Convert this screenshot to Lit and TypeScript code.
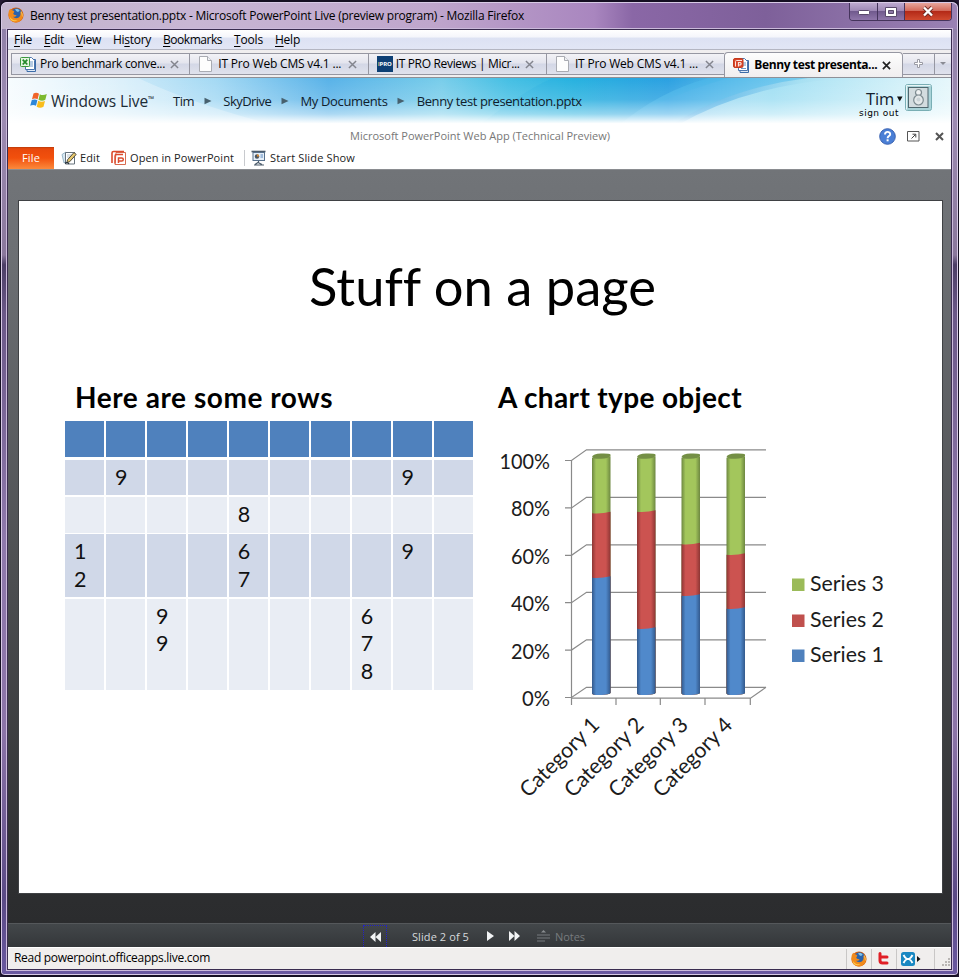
import { LitElement, html, svg, css } from "lit";
import { customElement, property, query } from "lit/decorators.js";

/* Text set to an exact advance width by adjusting its tracking. */
@customElement("fit-text")
class FitText extends LitElement {
  static styles = css`
    :host { display: inline-block; white-space: pre; flex: none; }
    .run { display: inline-block; }
  `;
  @property({ type: Number }) w = 0;
  @query(".run") run!: HTMLElement;
  firstUpdated() {
    const count = (this.textContent || "").length;
    const natural = this.run.getBoundingClientRect().width;
    if (this.w && count) {
      this.run.style.letterSpacing = `${(this.w - natural) / count}px`;
      this.style.width = `${this.w}px`;
    }
  }
  render() {
    return html`<span class="run"><slot></slot></span>`;
  }
}

const firefox = html`<svg width="16" height="16" viewBox="0 0 16 16">
  <circle cx="8" cy="8" r="7.6" fill="#d8600c"/>
  <circle cx="8.6" cy="6.6" r="5.4" fill="#2a62ac"/>
  <path d="M7 2.5c2-1 4-.3 4.6 1.2L10 5 8.5 4.2z" fill="#7fc4ec"/>
  <path d="M.6 5C1 3.200 2 2 2.600 1.800 2.800 3 3.600 3.400 5 3.600 6.400 4 6.800 5 5.400 6.200 4.800 7 6 8 8.600 8.200 7.800 10 6 10 5 9.600 6.600 12 10.400 11.800 12 9 12.800 7.600 12.600 5.600 12 4.400 14 5 15 7 14.800 9 14.400 13 11 15.400 8 15.400 3 15.400 0 11 .6 5z" fill="#f08a1c"/>
  <path d="M1.200 8c.8 4 4.800 6 8.400 5-2 1.800-5.600 1.600-7.200-.8z" fill="#fbc84a"/>
  <path d="M12.600 3.500c2 1.500 2.700 4.500 1.500 7-.2-2.500-.5-4-1.500-7z" fill="#fbd060"/>
</svg>`;

const sheetPages = html`<svg width="17" height="16" viewBox="0 0 17 16">
  <path d="M7 3.500h8.500v12H7z" fill="#dfeaf6" stroke="#3c6ca8"/>
  <path d="M5.500 1.500h6l3 3v9h-9z" fill="#fff" stroke="#4a74ac"/>
  <path d="M8 6h5M8 8h5M8 10h5" stroke="#6f98c6"/>
  <rect x=".5" y="1.500" width="9" height="9" rx="1" fill="#e6f5e2" stroke="#3c9a3c"/>
  <path d="M2.700 3.700l4.600 4.800M7.300 3.700L2.700 8.500" stroke="#258a2c" stroke-width="1.800"/>
</svg>`;

const slidePages = html`<svg width="17" height="16" viewBox="0 0 17 16">
  <path d="M7 3.500h8.500v12H7z" fill="#dfeaf6" stroke="#3c6ca8"/>
  <path d="M5.500 1.500h6l3 3v9h-9z" fill="#fff" stroke="#4a74ac"/>
  <path d="M10 6h3M10 8h3M8 11.500h5" stroke="#6f98c6"/>
  <rect x=".5" y="1.500" width="9.500" height="9" rx="1.500" fill="#d8452a" stroke="#c43a1c"/>
  <path d="M2.500 9.500V4.500q0-1 1-1H9" fill="none" stroke="#fbe4dc" stroke-width="1"/>
  <path d="M5.500 9.500V5.500h1.700q1.800 1 0 2.500H5.500" fill="none" stroke="#fbe4dc" stroke-width="1.200"/>
</svg>`;

const blankPage = html`<svg width="13" height="16" viewBox="0 0 13 16">
  <path d="M.5.5h8l4 4v11H.5z" fill="#fdfdfd" stroke="#a9abb2"/>
  <path d="M8.500.5v4h4" fill="#eef0f4" stroke="#a9abb2"/>
</svg>`;

const itpro = html`<span class="itpro"><i>I</i>PRO</span>`;

const cross = (size: number, color: string, weight: number) => html`<svg width=${size} height=${size} viewBox="0 0 8 8">
  <path d="M.8.8l6.400 6.400M7.200.8L.8 7.200" stroke=${color} stroke-width=${weight}/>
</svg>`;

const windowsFlag = html`<svg width="18" height="17" viewBox="0 0 18 17">
  <path d="M3.500 1.500C5.500.3 7.400.6 9 1.700L7.600 7.300C6 6.300 4 6.200 2 7.200z" fill="#f0642a"/>
  <path d="M9.800 2.200c2 1.200 4.400 1.200 7-.2l-1.500 5.800c-2 1.200-4.600 1.200-6.800 0z" fill="#7dba2f"/>
  <path d="M1.800 8.100c2-1 4-.9 5.600.1L6 13.800C4.200 12.700 2.200 12.700.2 13.800z" fill="#2f88d8"/>
  <path d="M8.200 8.800c2.200 1.200 4.600 1.200 6.800.1l-1.500 5.900c-2.200 1.200-4.600 1.200-6.800 0z" fill="#f9bd1c"/>
</svg>`;

const crumbArrow = html`<svg class="crumb-arrow" width="8" height="8" viewBox="0 0 8 8"><path d="M.5.800L7.500 4 .5 7.200z" fill="#47606e"/></svg>`;

const editIcon = html`<svg width="16" height="16" viewBox="0 0 16 16">
  <path d="M1 4.500L5 2v9l-2 2z" fill="#d9e8f2" stroke="#86a8bc" stroke-width=".8"/>
  <path d="M4.500 2.500h9v11.500h-9z" fill="#fff" stroke="#66727c"/>
  <path d="M6 5h5M6 7h4" stroke="#a8b6c0" stroke-width=".8"/>
  <path d="M6.500 9.800L13 2.500l2.200 1.900-6.500 7.300-2.800.8z" fill="#e8c86c" stroke="#3c3c34" stroke-width=".9"/>
  <path d="M4 13.500c1.500-1.500 3-1 4 .5" fill="none" stroke="#252f38" stroke-width="1.200"/>
</svg>`;

const pptIcon = html`<svg width="16" height="16" viewBox="0 0 16 16">
  <path d="M5 2.500h9.500v12H4z" fill="#fff" stroke="#d45a3c" stroke-width=".9"/>
  <path d="M1 13V3c0-1 .5-1.500 1.500-1.500H13" fill="none" stroke="#dc4a2c" stroke-width="1.600"/>
  <path d="M4 13.500V6c0-1 .5-1.500 1.500-1.500H12" fill="none" stroke="#dc4a2c" stroke-width="1.400"/>
  <path d="M7.500 13V8h3.300c2 0 2 3 0 3H8" fill="none" stroke="#dc4a2c" stroke-width="1.500"/>
</svg>`;

const showIcon = html`<svg width="16" height="16" viewBox="0 0 16 16">
  <path d="M.5 1.500h14" stroke="#4c5c6c" stroke-width="1.600"/>
  <rect x="2" y="2.500" width="11.500" height="8" fill="#e4eef8" stroke="#56708c"/>
  <circle cx="6" cy="6.500" r="2.200" fill="#4a545e"/><path d="M6 6.500V4.300a2.200 2.200 0 0 1 2.200 2.200z" fill="#e08a2c"/>
  <path d="M9.500 5H12M9.500 7H12" stroke="#5c8ac0"/>
  <path d="M7.500 11v2M4 14.500l3-2 4 2M3 15h10" stroke="#4c5c6c" stroke-width="1.200" fill="none"/>
</svg>`;

const bars = [
  { x: 592, tops: [577, 512.5] },
  { x: 637, tops: [628, 511] },
  { x: 681.5, tops: [595, 543.500] },
  { x: 726.500, tops: [608, 554] },
];

@customElement("slide-chart")
class SlideChart extends LitElement {
  static styles = css`
    :host { display: block; }
    svg { display: block; }
    text { font-family: Lato, "Liberation Sans", sans-serif; font-size: 21.500px; fill: #1c1c1c; }
  `;
  render() {
    const ticks = [0, 1, 2, 3, 4, 5];
    const front = (i: number) => 697.5 - i * 47.400;
    const back = (i: number) => 687.3 - i * 47.500;
    const grad = (id: string, edge: string, mid: string) => svg`
      <linearGradient id=${id} x1="0" x2="1" y1="0" y2="0">
        <stop offset="0" stop-color=${edge}/><stop offset=".22" stop-color=${mid}/>
        <stop offset=".75" stop-color=${mid}/><stop offset="1" stop-color=${edge}/>
      </linearGradient>`;
    return html`<svg width="420" height="375" viewBox="490 435 420 375">
      <defs>
        ${grad("blue", "#33598c", "#5089cb")}
        ${grad("red", "#8c3634", "#cc5350")}
        ${grad("green", "#6d8741", "#a3c65c")}
      </defs>
      <g fill="none" stroke="#8a8a8a" stroke-width="1.200">
        ${ticks.map((i) => svg`<path d="M565 ${front(i)}H571.500L586.500 ${back(i)}H766"/>`)}
        <path d="M571.500 460V705M571.500 698.200H750.500L766 687.300"/>
        <path d="M616 698v7M660.300 698v7M705 698v7M750.300 698v7"/>
      </g>
      ${bars.map(({ x, tops: [b, r] }) => {
        const w = 18.500;
        const seg = (top: number, id: string) =>
          svg`<path d="M${x} ${top + .7}Q${x + w / 2} ${top + 1.500} ${x + w} ${top - .8}V693Q${x + w - 1} 694.500 ${x + w / 2} 695T${x} 693.500Z" fill="url(#${id})"/>`;
        return svg`${seg(457, "green")}${seg(r, "red")}${seg(b, "blue")}
          <path d="M${x} 457Q${x + 1} 453.800 ${x + 9} 453.500T${x + w} 454.500V456Q${x + w - 2} 458.500 ${x + 9} 458.800T${x} 457Z" fill="#748f45"/>`;
      })}
      ${ticks.map((i) => {
        const w = i === 0 ? 28 : i === 5 ? 50.500 : 39;
        return svg`<text x=${550 - w} y=${706 - i * 47.400} textLength=${w} lengthAdjust="spacingAndGlyphs">${`${i * 20}%`}</text>`;
      })}
      ${[1, 2, 3, 4].map((n, i) => svg`<text transform="translate(${528.500 + i * 44.400} 798.500) rotate(-45)" textLength="102" lengthAdjust="spacingAndGlyphs">${`Category ${n}`}</text>`)}
      ${[["3", "#9bbb59", 584.500], ["2", "#c0504d", 620.500], ["1", "#4f81bd", 655.500]].map(
        ([n, c, y]) => svg`<rect x="792" y=${(y as number) - 6} width="12.500" height="12.500" fill=${c}/>
          <text x="810" y=${(y as number) + 6.500} textLength="74" lengthAdjust="spacingAndGlyphs">${`Series ${n}`}</text>`
      )}
    </svg>`;
  }
}

const rows: { kind: string; cells: Record<number, string[]> }[] = [
  { kind: "head", cells: {} },
  { kind: "dark r1", cells: { 1: ["9"], 8: ["9"] } },
  { kind: "lite r2", cells: { 4: ["8"] } },
  { kind: "dark r3", cells: { 0: ["1", "2"], 4: ["6", "7"], 8: ["9"] } },
  { kind: "lite r4", cells: { 2: ["9", "9"], 7: ["6", "7", "8"] } },
];

const menus: [string, number][] = [["File", 18], ["Edit", 20], ["View", 25], ["History", 38], ["Bookmarks", 59], ["Tools", 29], ["Help", 25]];

@customElement("app-root")
class AppRoot extends LitElement {
  static styles = css`
    :host { display: block; width: 959px; height: 977px; font-family: "Open Sans", "Noto Sans", sans-serif; font-size: 11.500px; color: #000; }
    * { box-sizing: border-box; }
    svg { display: block; flex: none; }
    .window { width: 959px; height: 977px; padding: 0 6px 6px 6px; border: 1px solid #150f22; border-width: 2px 1px; background:
      linear-gradient(#8c7ea6, #9d8bb2 12%, #8a789c 26%, #4c3e66 27%, #6b5888 32%, #8f79ac 55%, #8c74a8 75%, #5b4a86 92%, #6a58a0);
      display: flex; flex-direction: column; box-shadow: inset 0 0 0 1px #d8cae6; border-radius: 7px 7px 5px 5px; }
    .page { background: #241a34; min-height: 977px; }
    .title { height: 27px; flex: none; display: flex; align-items: flex-start; margin: 0 -5px; padding-left: 6px; border-radius: 6px 6px 0 0; border-top: 1px solid #d8cae6;
      background: linear-gradient(90deg, #c2b4cc 0, #c8b6d4 20%, #bfa6cc 45%, #a986bf 62%, #8a67a6 66%, #7e609a 80%, #9a82b4 100%); }
    .title .logo { margin-top: 4px; }
    .title fit-text { margin: 4px 0 0 6px; font-size: 12px; line-height: 17px; }
    .controls { margin-left: auto; margin-right: 5px; display: flex; height: 18px; border: 1px solid #45345c; border-top: 0; border-radius: 0 0 4px 4px; overflow: hidden; }
    .ctl { width: 28px; display: grid; place-items: center; background: linear-gradient(#bda9cf, #9c86b4 48%, #715a8e 50%, #8f76aa); border-right: 1px solid #45345c; }
    .ctl.mid { width: 27px; }
    .ctl.close { width: 46px; border-right: 0; background: linear-gradient(#e6a59c, #d2695a 46%, #b42a18 50%, #d04a30); }
    .client { width: 945px; height: 941px; border: 1px solid #3a2c50; outline: 1px solid #cbbadb; flex: none; display: flex; flex-direction: column; background: #fff; overflow: hidden; }
    .menu { height: 20px; flex: none; display: flex; gap: 12px; padding: 2px 0 0 6px; background: linear-gradient(#fff 0, #f5f6fb 35%, #dde2f3 45%, #e2e6f5 100%); border-bottom: 1px solid #b4b6c2; font-size: 12px; line-height: 16px; }
    .menu u { text-underline-offset: 1.500px; text-decoration-thickness: 1px; }
    .tabs { height: 28px; flex: none; display: flex; padding: 3px 0 2px 3px; background: #f0eeef; border-bottom: 1px solid #8f9097; align-items: stretch; }
    .tab { width: 178.500px; display: flex; align-items: center; border: 1px solid #9697a2; border-right: 0; padding-left: 8px; background: linear-gradient(#f2f2f6, #e4e5ee 45%, #d3d7e6 50%, #e0e2ec); }
    .tab fit-text { margin-left: 3px; font-size: 12px; line-height: 18px; }
    .tab .x { margin-left: 5px; }
    .tab.page-tab { padding-left: 9px; }
    .tab.page-tab fit-text { margin-left: 6px; }
    .tab.page-tab .x { margin-left: 7px; }
    .tab.active { background: linear-gradient(#fdfdfd, #f0eeef); border-right: 1px solid #9697a2; border-bottom: 0; border-radius: 4px 4px 0 0; margin: -1px 0 -2px; font-weight: 700; width: 179px; padding-left: 8px; }
    .tab.active fit-text { margin-left: 4px; }
    .tab.add { width: 31px; padding: 0; justify-content: center; border-left: 0; }
    .tab.more { width: 17px; padding: 0; justify-content: center; }
    .itpro { width: 16px; height: 16px; background: #0d3f74; color: #fff; font-size: 6px; line-height: 16px; text-align: center; letter-spacing: -.2px; flex: none; overflow: hidden; font-weight: 700; }
    .itpro i { font-style: normal; color: #e0c070; }
    .banner { height: 48px; flex: none; display: grid; }
    .banner > * { grid-area: 1 / 1; min-width: 0; }
    .crumbs { display: flex; align-items: center; padding: 0 0 3px 22px; font-size: 13px; color: #10202c; }
    .brand { font-size: 15.500px; margin-left: 3px; color: #1c2c36; }
    .tm { font-size: 8px; margin: -5px 19px 0 0; }
    .crumb-arrow { margin: 0 11.500px 0 9.700px; }
    .user { display: flex; justify-content: flex-end; padding: 6px 19px 0 0; gap: 2px; }
    .who { display: flex; flex-direction: column; align-items: flex-end; }
    .name { display: flex; align-items: center; font-size: 16.500px; line-height: 18px; gap: 3px; margin-top: 6px; color: #13202c; height: 17px; }
    .out { font-family: "DejaVu Sans", sans-serif; font-size: 9px; line-height: 11px; margin: 1px 4px 0 0; }
    .app { height: 20px; flex: none; display: grid; grid-template-columns: 342px 1fr auto; color: #777; font-size: 11px; line-height: 20px; }
    .app .heading { grid-column: 2; }
    .app-icons { display: flex; gap: 11px; align-items: center; padding-right: 7px; }
    .close-app { margin-left: 4px; }
    .tools { height: 23px; flex: none; display: flex; align-items: center; font-size: 11px; line-height: 22px; color: #222; padding-top: 1px; }
    .file { width: 46px; height: 22px; color: #fff; display: flex; justify-content: center; background: linear-gradient(#b93a0a 0, #e8480c 8%, #f2500d 50%, #fb8a3c 100%); margin-right: 7px; }
    .tools .lab { margin-left: 3px; }
    .tools .gap { margin-right: 11px; }
    .sep { width: 1px; height: 16px; background: #c8cace; margin: 0 6px 0 10px; }
    .stage { flex: 1; min-height: 0; padding: 31px 9px 0 11px; background: linear-gradient(#717478, #6c6f73 12%, #2c2d2f 97%, #2b2c2e); border-top: 1px solid #8a8c90; }
    .slide { width: 923px; height: 692px; background: #fff; outline: 1px solid #3f4144; font-family: Lato, "Liberation Sans", sans-serif; display: flex; flex-direction: column; }
    .slide h1 { margin: 52px 0 0 290px; font-size: 52.500px; line-height: 66px; font-weight: 400; height: 126px; }
    .cols { display: flex; }
    .left { width: 425px; padding-left: 46px; }
    h2 { margin: 0 0 0 10px; font-size: 28px; line-height: 37px; height: 42px; font-weight: 700; }
    .grid { width: 408px; display: grid; }
    .row { display: grid; grid-template-columns: repeat(10, 1fr); column-gap: 1.500px; }
    .cell { font-size: 21.500px; line-height: 27.600px; padding: 4px 0 0 9px; color: #111; }
    .cell div { height: 27.600px; }
    .head { height: 38.500px; } .head .cell { background: #4f81bd; height: 35.500px; padding: 0; }
    .dark .cell { background: #d0d8e8; } .lite .cell { background: #e9edf4; }
    .r1 { height: 37px; } .r2 { height: 37.500px; } .r3 { height: 64.500px; } .r4 { height: 91.500px; }
    .r1 .cell, .r2 .cell, .r3 .cell { margin-bottom: 1.500px; }
    .right { padding-left: 46px; }
    .right h2 { margin-left: 8px; }
    .right slide-chart { margin-top: 14px; }
    .player { height: 24px; flex: none; display: flex; align-items: center; background: linear-gradient(#43474a, #34373a); border-top: 1px solid #55585b; padding: 1px 0 0 355px; color: #d6dadd; font-size: 11px; }
    .focus { width: 24px; height: 22px; border: 1px dotted #2222c8; border-bottom: 0; display: grid; place-items: center; margin-right: 25px; }
    .next { margin-left: 18px; }
    .last { margin: 0 17px 0 15px; }
    .notes { color: #777b7e; margin-left: 5px; }
    .status { height: 22px; flex: none; display: flex; background: #f0eeed; border-top: 1px solid #fff; padding-left: 6px; font-size: 12px; line-height: 20px; }
    .addons { margin-left: auto; display: flex; align-items: center; }
    .addon { height: 20px; border-left: 1px solid #c9c7c6; display: flex; align-items: center; gap: 2px; }
    .a1 { width: 25px; padding-left: 4px; } .a2 { width: 25px; padding-left: 6px; } .a3 { width: 38px; padding-left: 4px; } .a4 { width: 17px; padding: 5px 0 0 4px; }
  `;

  tab(icon: unknown, text: string, w: number, cls = "") {
    return html`<div class="tab ${cls}">${icon}<fit-text w=${w}>${text}</fit-text>
      <span class="x">${cls === "active" ? cross(9, "#222", 1.5) : cross(9, "#83858e", 1.300)}</span></div>`;
  }

  sky() {
    return html`<svg width="943" height="48" viewBox="0 0 943 48" preserveAspectRatio="none">
      <defs>
        <linearGradient id="h" x1="0" x2="1" y1="0" y2="0">
          <stop offset="0" stop-color="#f4fbfe"/><stop offset=".1" stop-color="#d6eefa"/>
          <stop offset=".22" stop-color="#a4d9f4"/><stop offset=".34" stop-color="#58b2e8"/>
          <stop offset=".46" stop-color="#78cdea"/><stop offset=".53" stop-color="#45bfe4"/>
          <stop offset=".6" stop-color="#2ab4e0"/><stop offset=".7" stop-color="#2f9fe2"/>
          <stop offset=".84" stop-color="#a5dff2"/><stop offset=".93" stop-color="#d8f2f9"/><stop offset="1" stop-color="#f6fcfe"/>
        </linearGradient>
        <linearGradient id="swoosh" x1="0" x2="1" y1="0" y2="0">
          <stop offset="0" stop-color="#bfe9f8" stop-opacity=".5"/><stop offset=".35" stop-color="#a0dff3"/><stop offset="1" stop-color="#e6f7fb"/>
        </linearGradient>
        <linearGradient id="fade" x1="0" x2="0" y1="0" y2="1">
          <stop offset="0" stop-color="#fff" stop-opacity="0"/><stop offset=".45" stop-color="#fff" stop-opacity=".15"/>
          <stop offset=".75" stop-color="#fff" stop-opacity=".5"/><stop offset=".95" stop-color="#fff"/>
        </linearGradient>
      </defs>
      <rect width="943" height="48" fill="url(#h)"/>
      <path d="M130 0Q190 28 270 48H0V0z" fill="#fff" opacity=".28"/>
      <path d="M470 48Q520 10 545 0H720Q640 24 610 48z" fill="#18a8dc" opacity=".18"/>
      <path d="M610 48Q650 14 700 0H800Q720 10 662 48z" fill="#49b9ec" opacity=".5"/>
      <path d="M668 48Q740 6 842 0H943V48z" fill="url(#swoosh)"/>
      <rect width="943" height="48" fill="url(#fade)"/>
    </svg>`;
  }

  render() {
    return html`<div class="page"><div class="window">
      <div class="title">
        <span class="logo">${firefox}</span>
        <fit-text w="494">Benny test presentation.pptx - Microsoft PowerPoint Live (preview program) - Mozilla Firefox</fit-text>
        <div class="controls">
          <div class="ctl"><svg width="12" height="6"><rect x=".5" y="1.500" width="11" height="4" rx="1" fill="#fff" stroke="#5a4a6c"/></svg></div>
          <div class="ctl mid"><svg width="12" height="10"><path d="M.5.5h11v9H.5z" fill="#fff" stroke="#5a4a6c"/><path d="M3.500 3.500h5v3h-5z" fill="#8d78a6" stroke="#5a4a6c"/></svg></div>
          <div class="ctl close"><svg width="12" height="11" viewBox="0 0 12 11"><path d="M2 1.500l8 8M10 1.500l-8 8" stroke="#6c2a24" stroke-width="4"/><path d="M2 1.500l8 8M10 1.500l-8 8" stroke="#fff" stroke-width="2.400"/></svg></div>
        </div>
      </div>
      <div class="client">
        <div class="menu">${menus.map(([m, w]) => m === "History"
          ? html`<fit-text w=${w}>Hi<u>s</u>tory</fit-text>`
          : html`<fit-text w=${w}><u>${m[0]}</u>${m.slice(1)}</fit-text>`)}</div>
        <div class="tabs">
          ${this.tab(sheetPages, "Pro benchmark conve...", 125)}
          ${this.tab(blankPage, "IT Pro Web CMS v4.1 ...", 123, "page-tab")}
          ${this.tab(itpro, "IT PRO Reviews | Micr...", 124)}
          ${this.tab(blankPage, "IT Pro Web CMS v4.1 ...", 123, "page-tab")}
          ${this.tab(slidePages, "Benny test presenta...", 123, "active")}
          <div class="tab add"><svg width="10" height="10"><path d="M3.500.5h2v3h3v2h-3v3h-2v-3h-3v-2h3z" fill="#fff" stroke="#9a9ba4"/></svg></div>
          <div class="tab more"><svg width="6" height="4"><path d="M0 0h6L3 3z" fill="#8a8b94"/></svg></div>
        </div>
        <div class="banner">
          ${this.sky()}
          <div class="crumbs">
            ${windowsFlag}<fit-text class="brand" w="97">Windows Live</fit-text><span class="tm">™</span>
            <fit-text w="21">Tim</fit-text>${crumbArrow}
            <fit-text w="48">SkyDrive</fit-text>${crumbArrow}
            <fit-text w="87">My Documents</fit-text>${crumbArrow}
            <fit-text w="165">Benny test presentation.pptx</fit-text>
          </div>
          <div class="user">
            <div class="who">
              <div class="name"><fit-text w="28">Tim</fit-text><svg width="6" height="6"><path d="M0 .5h5.500L2.700 5.500z" fill="#111"/></svg></div>
              <fit-text class="out" w="40">sign out</fit-text>
            </div>
            <svg width="27" height="28" viewBox="0 0 27 28">
              <rect x=".5" y=".5" width="26" height="26" rx="2" fill="#a9d3d8" stroke="#79aeb4"/>
              <path d="M1.500 25.500V1.500h24" fill="none" stroke="#e8f5f6"/>
              <rect x="3.500" y="3.500" width="19.500" height="20" fill="#d3dcdf" stroke="#4f676e"/>
              <circle cx="13.500" cy="8.500" r="3" fill="#eef1f2" stroke="#7d8b90" stroke-width="1.200"/>
              <ellipse cx="13.500" cy="16" rx="4.800" ry="5" fill="#e4e9ea" stroke="#7d8b90" stroke-width="1.200"/>
              <circle cx="13.500" cy="15.500" r="2" fill="#cbd4d7"/>
            </svg>
          </div>
        </div>
        <div class="app">
          <fit-text class="heading" w="260">Microsoft PowerPoint Web App (Technical Preview)</fit-text>
          <div class="app-icons">
            <svg width="17" height="17" viewBox="0 0 17 17"><circle cx="8.500" cy="8.500" r="7.800" fill="#4a7fd6" stroke="#3a62b0"/><path d="M6 6.500C6 3 11.200 3.200 11.200 6.200 11.200 8.200 8.600 8 8.600 10.200" fill="none" stroke="#fff" stroke-width="1.900"/><rect x="7.600" y="11.300" width="2" height="2" fill="#fff"/></svg>
            <svg width="13" height="11" viewBox="0 0 13 11"><path d="M.5.5h11.500v9.500H.5z" fill="#fff" stroke="#555"/><path d="M4.500 7.500L8.500 3.500M5.500 3.200h3.300v3.300" fill="none" stroke="#444"/></svg>
            <svg class="close-app" width="9" height="9" viewBox="0 0 9 9"><path d="M1 1l7 7M8 1L1 8" stroke="#555" stroke-width="2"/></svg>
          </div>
        </div>
        <div class="tools">
          <div class="file"><fit-text w="18">File</fit-text></div>
          ${editIcon}<fit-text class="lab gap" w="20">Edit</fit-text>
          ${pptIcon}<fit-text class="lab" w="104">Open in PowerPoint</fit-text>
          <div class="sep"></div>${showIcon}<fit-text class="lab" w="85">Start Slide Show</fit-text>
        </div>
        <div class="stage">
          <div class="slide">
            <h1><fit-text w="345">Stuff on a page</fit-text></h1>
            <div class="cols">
              <div class="left">
                <h2><fit-text w="258">Here are some rows</fit-text></h2>
                <div class="grid">
                  ${rows.map((r) => html`<div class="row ${r.kind}">
                    ${Array.from({ length: 10 }, (_, i) => html`<div class="cell">${(r.cells[i] || []).map((d) => html`<div>${d}</div>`)}</div>`)}
                  </div>`)}
                </div>
              </div>
              <div class="right">
                <h2><fit-text w="244">A chart type object</fit-text></h2>
                <slide-chart></slide-chart>
              </div>
            </div>
          </div>
        </div>
        <div class="player">
          <div class="focus"><svg width="11" height="10"><path d="M0 5L5.500 0v10zM5.500 5L11 0v10z" fill="#f2f4f5"/></svg></div>
          <fit-text w="57">Slide 2 of 5</fit-text>
          <svg class="next" width="7" height="10"><path d="M0 0l7 5-7 5z" fill="#f2f4f5"/></svg>
          <svg class="last" width="11" height="10"><path d="M11 5L5.500 0v10zM5.500 5L0 0v10z" fill="#f2f4f5"/></svg>
          <svg width="13" height="14"><path d="M4 3.500L6.500 1 9 3.500z" fill="#8a8e91"/><path d="M0 6h13M0 9h13M0 12h8" stroke="#777b7e"/></svg>
          <fit-text class="notes" w="30">Notes</fit-text>
        </div>
        <div class="status">
          <fit-text w="196">Read powerpoint.officeapps.live.com</fit-text>
          <div class="addons">
            <div class="addon a1">${firefox}</div>
            <div class="addon a2"><svg width="11" height="13" viewBox="0 0 11 13"><path d="M2 1.600v7q0 2.400 2.500 2.400H9M2 5h7" fill="none" stroke="#e01f26" stroke-width="3" stroke-linecap="round"/></svg></div>
            <div class="addon a3"><svg width="14" height="14" viewBox="0 0 14 14"><rect width="14" height="14" rx="2.500" fill="#1a88c2"/><path d="M2.500 3Q4 6 6 7 4 8 2.500 11M11.500 3Q10 6 8 7 10 8 11.500 11M5 7h4" fill="none" stroke="#fff" stroke-width="1.900"/></svg><svg width="4" height="6"><path d="M0 0l3.500 3L0 6z" fill="#111"/></svg></div>
            <div class="addon a4"><svg width="12" height="12"><path d="M9 4h2M6 7h2M9 7h2M3 10h2M6 10h2M9 10h2" stroke="#b9b6b4" stroke-width="2"/></svg></div>
          </div>
        </div>
      </div>
    </div></div>`;
  }
}
